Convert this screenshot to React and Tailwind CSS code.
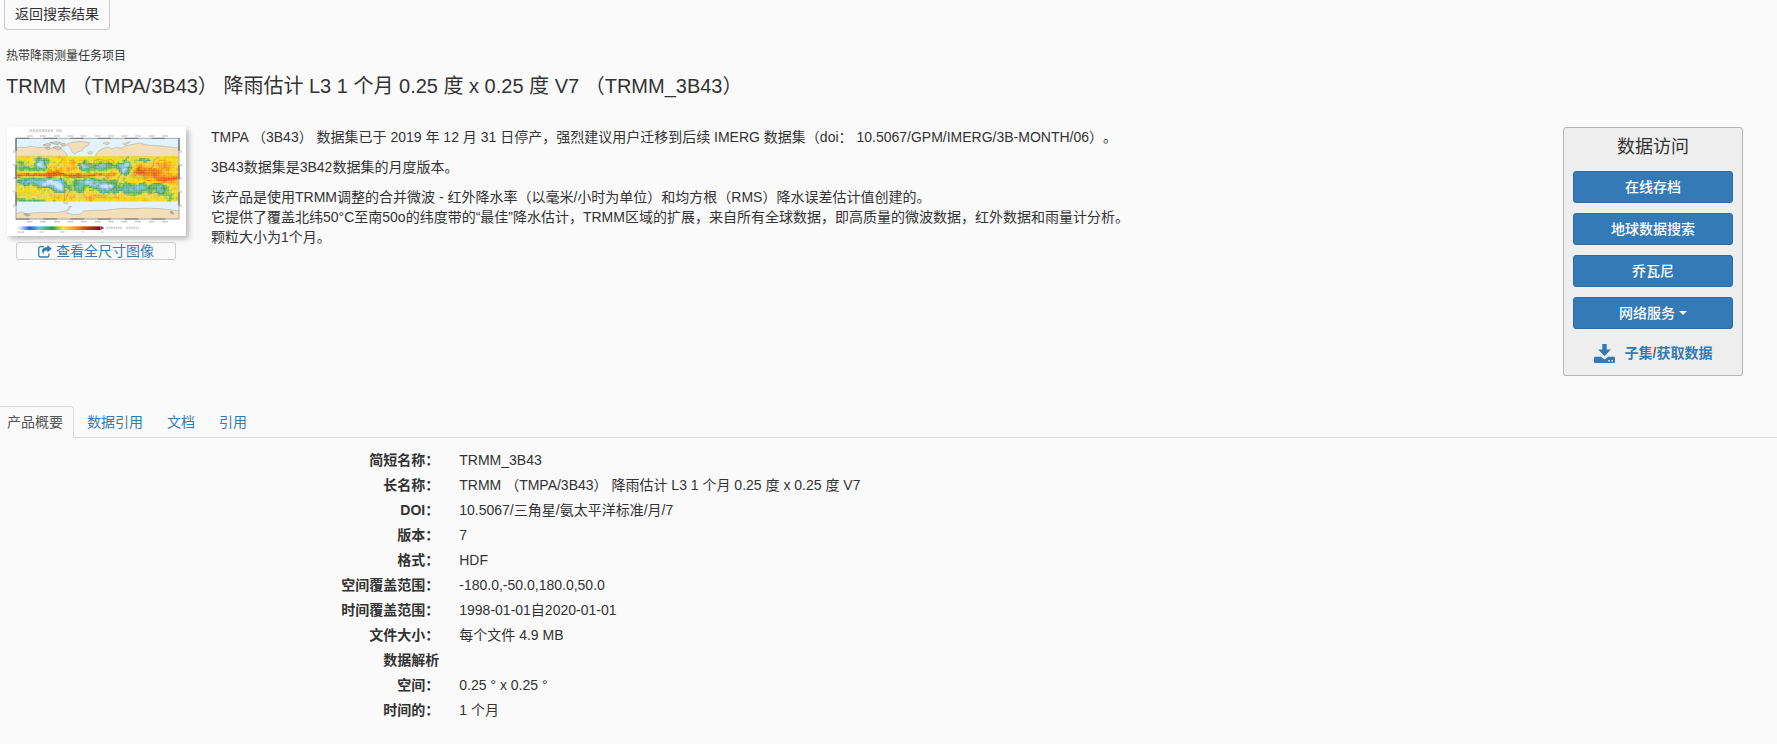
const RAMP = [
  [0, [205, 225, 250]],
  [0.14, [140, 188, 238]],
  [0.25, [105, 190, 185]],
  [0.36, [75, 165, 95]],
  [0.46, [130, 190, 70]],
  [0.54, [235, 225, 55]],
  [0.66, [252, 208, 15]],
  [0.8, [247, 155, 10]],
  [1, [230, 85, 15]],
];

// [centre x, centre y, radius x, radius y, strength]
const CELLS = [
  [118, 131, 18, 18, -0.7],
  [75, 146, 28, 8, -0.3],
  [60, 130, 22, 10, -0.18],
  [110, 165, 100, 6, 0.5],
  [160, 158, 30, 10, 0.22],
  [255, 165, 50, 6, 0.45],
  [70, 184, 34, 9, -0.36],
  [150, 188, 44, 14, -0.7],
  [178, 204, 20, 12, -0.6],
  [210, 135, 18, 18, 0.18],
  [250, 138, 14, 18, -0.4],
  [305, 138, 55, 12, -0.42],
  [372, 133, 15, 18, -0.45],
  [370, 158, 12, 12, -0.45],
  [262, 186, 26, 14, -0.55],
  [315, 198, 30, 16, -0.65],
  [232, 200, 14, 24, -0.3],
  [385, 206, 32, 18, -0.36],
  [425, 203, 24, 18, -0.32],
  [475, 203, 24, 15, -0.42],
  [430, 120, 26, 6, -0.34],
  [410, 150, 18, 14, 0.34],
  [455, 160, 38, 18, 0.3],
  [505, 177, 34, 11, 0.36],
  [500, 135, 24, 18, 0.18],
  [340, 160, 40, 7, 0.18],
  [80, 241, 70, 7, -0.28],
  [300, 245, 60, 5, -0.12],
  [510, 232, 28, 10, -0.2],
  [300, 230, 120, 7, 0.12],
];

function hash(x, y) {
  const n = Math.sin(x * 127.1 + y * 311.7) * 43758.5453;
  return n - Math.floor(n);
}

function smoothNoise(x, y) {
  const ix = Math.floor(x);
  const iy = Math.floor(y);
  const u = (x - ix) ** 2 * (3 - 2 * (x - ix));
  const v = (y - iy) ** 2 * (3 - 2 * (y - iy));
  const top = hash(ix, iy) * (1 - u) + hash(ix + 1, iy) * u;
  const bottom = hash(ix, iy + 1) * (1 - u) + hash(ix + 1, iy + 1) * u;
  return top * (1 - v) + bottom * v - 0.5;
}

function rainColour(px, py) {
  const x = px + smoothNoise(px / 16, py / 12) * 18;
  const y = py + smoothNoise(px / 18 + 40, py / 12) * 7;
  let v = 0.62;
  for (const [cx, cy, rx, ry, s] of CELLS) {
    v += s * Math.exp(-(((x - cx) / rx) ** 2) - ((y - cy) / ry) ** 2);
  }
  v += (hash(px, py) - 0.5) * 0.1 + smoothNoise(px / 10 + 9, py / 7) * 0.22;
  v = Math.max(0, Math.min(1, v));
  let i = 1;
  while (i < RAMP.length - 1 && RAMP[i][0] < v) i++;
  const [a, ca] = RAMP[i - 1];
  const [b, cb] = RAMP[i];
  const t = (v - a) / (b - a);
  return `rgb(${ca.map((c, k) => Math.round(c + (cb[k] - c) * t)).join(",")})`;
}

const rain = [];
for (let y = 110; y < 245; y += 5) {
  for (let x = 46; x < 536; x += 5) rain.push([x, y, rainColour(x, y)]);
}

const ticks = [88, 128, 170, 210, 250, 292, 332, 372, 413, 454, 494];

function RainMap() {
  return (
    <svg viewBox="20 22 537 327" className="block h-[109px] w-full" aria-hidden="true">
      <defs>
        <linearGradient id="scale">
          <stop offset="0" stopColor="#cfe4fb" />
          <stop offset="0.12" stopColor="#2a5fc8" />
          <stop offset="0.24" stopColor="#6cc5dc" />
          <stop offset="0.4" stopColor="#2f9a50" />
          <stop offset="0.53" stopColor="#f2e53a" />
          <stop offset="0.68" stopColor="#f79a12" />
          <stop offset="0.82" stopColor="#d93a12" />
          <stop offset="1" stopColor="#7d0d18" />
        </linearGradient>
        <filter id="soft" x="0" y="0" width="1" height="1">
          <feGaussianBlur stdDeviation="1.6" />
        </filter>
        <clipPath id="frame">
          <rect x="46" y="56" width="490" height="243" />
        </clipPath>
      </defs>
      <rect x="20" y="22" width="537" height="327" fill="#fff" />
      <path d="M88 33h72M168 33h18" stroke="#d2d2d2" strokeWidth="8" strokeDasharray="7 2" />
      <g clipPath="url(#frame)">
        <rect x="46" y="56" width="490" height="243" fill="#e2f3fd" />
        <g fill="#f2dfb8" stroke="#aba28c" strokeWidth="1.5">
          <path d="M46 86l14-4 16 2 14-5 24 5 18-2 20 4 18-3 14 6 10 8 8 13H46z" />
          <path d="M198 74l20-7 28-2 22 4-4 8-12 6-6 10-14 4-8 6-8-4-4-12-6-8z" />
          <path d="M262 99l8-4 8 3-4 4h-10z" />
          <path d="M284 112l8-16 16-10 16-4 8 6 14-4 20 1 10-7 22-4 20-4 22 6 30 2 32 3 34 4v27z" />
          <path d="M308 71l12-4 8 4-8 4zM368 72l22-6-4 4-14 6z" />
          <path d="M188 240l18 0-6 13-8-1z" />
        </g>
        <g fill="#d8d0ba" stroke="#8c8c88" strokeWidth="1.5">
          <path d="M128 76l14-5 10 4-8 5zM148 69l20-3 14 3-12 6zM158 83l14-4 12 6-10 5zM180 74l12-4 4 8-10 2z" />
          <path d="M136 84l10-2 4 6-10 2z" />
        </g>
        <g filter="url(#soft)">
          {rain.map(([x, y, fill]) => (
            <rect key={`${x}-${y}`} x={x} y={y} width="5.5" height="5.5" fill={fill} />
          ))}
        </g>
        <g fill="none" stroke="#5f6432" strokeWidth="1.6" strokeOpacity="0.6">
          <path d="M130 112l4 22 10 14 14 10 12 8M176 110l12 8-14 16-8 14 8 12M172 166l14-6 22 10 22 12-10 20-16 16-8 22M180 168l2 16 12 16-2 44" />
          <path d="M280 124l14-6 18 4 22-2 8 8-16 4 20 6 10 16 10 4-12 16-6 22-16 16-8-14-2-22-10-10-20-2-10-10 4-16z" />
          <path d="M350 136l14 14 12-8 20 4 10 22 8-18 12 2 6 20 10 6M446 148l12-6 2-20 14-8M432 180l20 4M462 168l8 8" />
          <path d="M446 204l14-12 16-2 14 10 4 14-12 10-14-6-18 4z" />
        </g>
        <path d="M46 299v-17l20-5 12 6 20-3 30-2 32 1 28-3 14-6 4-8 8-2-8 10-8 9 22 6 20-2 10-9 28-2 44-1 40-5 38 1 36-2 44 2 44 5 24 3 2 24z" fill="#f2dfb8" stroke="#aba28c" strokeWidth="1.5" />
        <path d="M70 284l8-3 12 5-10 4zM205 262l6-3M510 274l8 2 2 8-10-3z" fill="#b5ae9c" stroke="#a59e8e" strokeWidth="1.5" />
      </g>
      <rect x="47" y="56" width="489" height="242" fill="none" stroke="#a8a8a8" strokeWidth="3" />
      <path d="M47 56h41m41 0h41m40 0h41m41 0h40m41 0h41m40 0h41M47 298h41m41 0h41m40 0h41m41 0h40m41 0h41m40 0h41" stroke="#777" strokeWidth="3" />
      <path d="M47 56v38m0 42v42m0 40v40M536 56v38m0 42v42m0 40v40" stroke="#555" strokeWidth="3" />
      <g stroke="#cfcfcf" strokeWidth="5">
        {ticks.map((x) => (
          <path key={x} d={`M${x - 9} 49h18M${x - 9} 306h18`} />
        ))}
      </g>
      <g stroke="#d4d4d4" strokeWidth="6">
        {[96, 136, 176, 216, 258].map((y) => (
          <path key={y} d={`M38 ${y}h6M539 ${y}h6`} />
        ))}
      </g>
      <path d="M50 325l9-6v12z" fill="#d7e6fa" />
      <rect x="59" y="320" width="242" height="11" fill="url(#scale)" />
      <path d="M312 325l-10-6v12z" fill="#a03672" />
      <path d="M318 324h48M378 324h38" stroke="#c8c8c8" strokeWidth="6" strokeDasharray="5 2" />
      <path d="M52 337h20M117 337h13M180 337h12M245 337h6M302 337h8" stroke="#c8c8c8" strokeWidth="5" strokeDasharray="4 1" />
    </svg>
  );
}

function ShareIcon() {
  return (
    <svg viewBox="0 0 14 13" className="h-[13px] w-[14px]" fill="currentColor" aria-hidden="true">
      <path
        d="M6 1.7H2.4A1.7 1.7 0 0 0 .7 3.4v6.9A1.7 1.7 0 0 0 2.4 12h6.9a1.7 1.7 0 0 0 1.7-1.7V8.6"
        fill="none"
        stroke="currentColor"
        strokeWidth="1.3"
      />
      <path d="M9.4 0 13.8 3.8 9.4 7.6V5.4C6.4 5.3 5.2 6.4 5.6 9.4 2.6 5.8 4.4 2.2 9.4 2.1z" />
    </svg>
  );
}

function DownloadIcon() {
  return (
    <svg viewBox="0 0 21 19" className="h-[19px] w-[21px]" fill="currentColor" aria-hidden="true">
      <path d="M8.3 0h4.4v5.5h4.1L10.5 12.2 4.2 5.5h4.1z" />
      <path
        fillRule="evenodd"
        d="M1 12.8h6l3.5 2.7 3.5-2.7h6a1 1 0 0 1 1 1V18a1 1 0 0 1-1 1H1a1 1 0 0 1-1-1v-4.2a1 1 0 0 1 1-1zM14.2 16.1v1.5h1.6v-1.5zM17.4 16.1v1.5H19v-1.5z"
      />
    </svg>
  );
}

const accessLinks = ["在线存档", "地球数据搜索", "乔瓦尼"];

const tabs = ["数据引用", "文档", "引用"];

const details = [
  ["简短名称：", "TRMM_3B43"],
  ["长名称：", "TRMM （TMPA/3B43） 降雨估计 L3 1 个月 0.25 度 x 0.25 度 V7"],
  ["DOI：", "10.5067/三角星/氨太平洋标准/月/7"],
  ["版本：", "7"],
  ["格式：", "HDF"],
  ["空间覆盖范围：", "-180.0,-50.0,180.0,50.0"],
  ["时间覆盖范围：", "1998-01-01自2020-01-01"],
  ["文件大小：", "每个文件 4.9 MB"],
  ["数据解析", ""],
  ["空间：", "0.25 ° x 0.25 °"],
  ["时间的：", "1 个月"],
];

function AccessPanel() {
  const button =
    "flex h-8 w-full items-center justify-center rounded-[3px] border border-[#2e6da4] bg-[#337ab7] font-medium text-white";
  return (
    <aside className="flex w-[180px] shrink-0 flex-col rounded-[3px] border border-[#b5b5b5] bg-[#eee] px-[9px] pb-3">
      <h2 className="pt-[7px] text-center text-lg leading-6">数据访问</h2>
      <div className="mt-3 flex flex-col gap-[10px]">
        {accessLinks.map((label) => (
          <a key={label} href="#access" className={button}>
            {label}
          </a>
        ))}
        <button type="button" className={button}>
          网络服务
          <span className="ml-1 border-x-4 border-t-4 border-x-transparent border-t-white" />
        </button>
      </div>
      <a href="#subset" className="mt-[14px] flex items-center justify-center gap-[10px] font-bold text-[#337ab7]">
        <DownloadIcon />
        子集/获取数据
      </a>
    </aside>
  );
}

export default function App() {
  return (
    <div className="min-h-screen bg-[#fafafa] font-['Liberation_Sans','Noto_Sans_CJK_SC',sans-serif] text-sm leading-5 text-[#333] [text-spacing-trim:space-all]">
      <header className="px-1">
        <button
          type="button"
          className="h-[30px] rounded-b-[4px] border border-t-0 border-[#ccc] bg-[#fafafa] px-[10px] pb-[2px]"
        >
          返回搜索结果
        </button>
        <p className="mt-4 pl-[2px] text-xs leading-5">热带降雨测量任务项目</p>
        <h1 className="mt-2 pl-[2px] text-xl leading-6">
          TRMM （TMPA/3B43） 降雨估计 L3 1 个月 0.25 度 x 0.25 度 V7 （TRMM_3B43）
        </h1>
      </header>

      <main>
        <section className="mt-[29px] flex items-start pr-[34px] pl-[7px]">
          <div className="flex w-[179px] shrink-0 flex-col">
            <div className="w-full shadow-[3px_3px_5px_#bbb]">
              <RainMap />
            </div>
            <a
              href="#image"
              className="mt-[6px] ml-[9px] flex h-[18px] w-40 items-center justify-center gap-1 rounded-[3px] border border-[#ccc] text-[#337ab7]"
            >
              <ShareIcon />
              查看全尺寸图像
            </a>
          </div>
          <div className="ml-[25px] flex flex-1 flex-col gap-[10px]">
            <p>
              TMPA （3B43） 数据集已于 2019 年 12 月 31 日停产，强烈建议用户迁移到后续 IMERG 数据集（doi： 10.5067/GPM/IMERG/3B-MONTH/06）。
            </p>
            <p>3B43数据集是3B42数据集的月度版本。</p>
            <p>
              该产品是使用TRMM调整的合并微波 - 红外降水率（以毫米/小时为单位）和均方根（RMS）降水误差估计值创建的。
              <br />
              它提供了覆盖北纬50°C至南50o的纬度带的“最佳”降水估计，TRMM区域的扩展，来自所有全球数据，即高质量的微波数据，红外数据和雨量计分析。
              <br />
              颗粒大小为1个月。
            </p>
          </div>
          <AccessPanel />
        </section>

        <nav className="mt-[30px] flex items-stretch">
          <a
            href="#summary"
            aria-current="page"
            className="rounded-tr-[4px] border-t border-r border-[#ddd] pt-[5px] pb-[6px] pr-[10px] pl-[7px] text-[#555]"
          >
            产品概要
          </a>
          <div className="flex flex-1 gap-6 border-b border-[#ddd] pt-[6px] pb-[5px] pl-[13px]">
            {tabs.map((label) => (
              <a key={label} href="#tab" className="text-[#337ab7]">
                {label}
              </a>
            ))}
          </div>
        </nav>

        <dl className="mt-[9px]">
          {details.map(([label, value]) => (
            <div key={label} className="flex h-[25px] items-center">
              <dt className="w-1/4 pr-[5px] text-right font-bold">{label}</dt>
              <dd className="flex-1 pl-[15px]">{value}</dd>
            </div>
          ))}
        </dl>
      </main>
    </div>
  );
}
